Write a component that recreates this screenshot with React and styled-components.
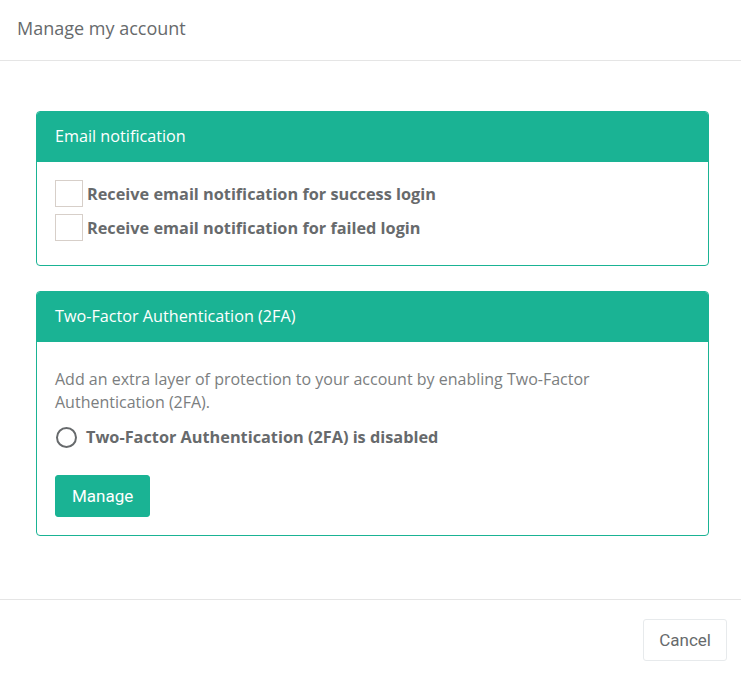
import React, { useState } from 'react';
import styled, { createGlobalStyle } from 'styled-components';

const GlobalStyle = createGlobalStyle`
	html, body {
		margin: 0;
		padding: 0;
		background: #ffffff;
	}
	body {
		font-family: "Open Sans", "Noto Sans", sans-serif;
		color: #676a6c;
	}
	* { box-sizing: border-box; }
`

const Modal = styled.div`
	width: 741px;
	height: 674px;
	display: flex;
	flex-direction: column;
	background: #fff;
`

const ModalHeader = styled.div`
	height: 61px;
	border-bottom: 1px solid #e5e5e5;
	display: flex;
	align-items: center;
	padding: 0 17px 4px;
`

const Title = styled.h4`
	margin: 0;
	font-size: 18px;
	font-weight: 400;
	color: #676a6c;
`

const ModalBody = styled.div`
	flex: 1;
	padding: 50px 32px 0 36px;
	display: flex;
	flex-direction: column;
	gap: 25px;
`

const Panel = styled.div`
	border: 1px solid #1ab394;
	border-radius: 4px;
	overflow: hidden;
`

const PanelHeading = styled.div`
	height: 50px;
	background: #1ab394;
	color: #fff;
	font-size: 16.2px;
	display: flex;
	align-items: center;
	padding: 0 18px 2px;
`

const PanelBody = styled.div`
	padding: ${props => props.pad || '18px 18px 24px'};
	display: flex;
	flex-direction: column;
	gap: ${props => props.gap || '7px'};
`

const CheckRow = styled.label`
	display: flex;
	align-items: center;
	gap: 4px;
	font-size: 16.3px;
	font-weight: 700;
	cursor: pointer;
`

const Box = styled.span`
	width: 28px;
	height: 27px;
	border: 1px solid #d7cfc9;
	background: ${props => props.checked ? '#1ab394' : '#fff'};
	flex-shrink: 0;
`

const Description = styled.p`
	margin: 0;
	font-size: 16px;
	line-height: 23px;
	color: #7b7e80;
`

const StatusRow = styled.div`
	display: flex;
	align-items: center;
	gap: 9px;
	font-size: 16.3px;
	font-weight: 700;
	margin-top: 12px;
`

const Ring = styled.span`
	width: 21px;
	height: 21px;
	border-radius: 50%;
	border: 2px solid #676a6c;
	margin-left: 1px;
`

const PrimaryButton = styled.button`
	align-self: flex-start;
	margin-top: 27px;
	height: 42px;
	padding: 0 16px;
	background: #1ab394;
	border: 1px solid #1ab394;
	border-radius: 3px;
	color: #fff;
	font-family: Roboto, "Liberation Sans", sans-serif;
	font-size: 17px;
	cursor: pointer;
`

const ModalFooter = styled.div`
	height: 75px;
	border-top: 1px solid #e5e5e5;
	display: flex;
	justify-content: flex-end;
	align-items: flex-start;
	padding: 19px 14px 0;
`

const DefaultButton = styled.button`
	height: 42px;
	padding: 0 15px;
	background: #fff;
	border: 1px solid #e7eaec;
	border-radius: 3px;
	color: #676a6c;
	font-family: Roboto, "Liberation Sans", sans-serif;
	font-size: 17px;
	cursor: pointer;
`

const Checkbox = ({ label }) => {
	const [checked, setChecked] = useState(false)
	return (
		<CheckRow onClick={() => setChecked(!checked)}>
			<Box checked={checked} />
			{label}
		</CheckRow>
	)
}

export default function App() {
	return (
		<Modal>
			<GlobalStyle />
			<ModalHeader>
				<Title>Manage my account</Title>
			</ModalHeader>
			<ModalBody>
				<Panel>
					<PanelHeading>Email notification</PanelHeading>
					<PanelBody>
						<Checkbox label="Receive email notification for success login" />
						<Checkbox label="Receive email notification for failed login" />
					</PanelBody>
				</Panel>
				<Panel>
					<PanelHeading>Two-Factor Authentication (2FA)</PanelHeading>
					<PanelBody pad="26px 18px 18px" gap="0">
						<Description>
							Add an extra layer of protection to your account by enabling Two-Factor Authentication (2FA).
						</Description>
						<StatusRow>
							<Ring />
							Two-Factor Authentication (2FA) is disabled
						</StatusRow>
						<PrimaryButton>Manage</PrimaryButton>
					</PanelBody>
				</Panel>
			</ModalBody>
			<ModalFooter>
				<DefaultButton>Cancel</DefaultButton>
			</ModalFooter>
		</Modal>
	)
}
